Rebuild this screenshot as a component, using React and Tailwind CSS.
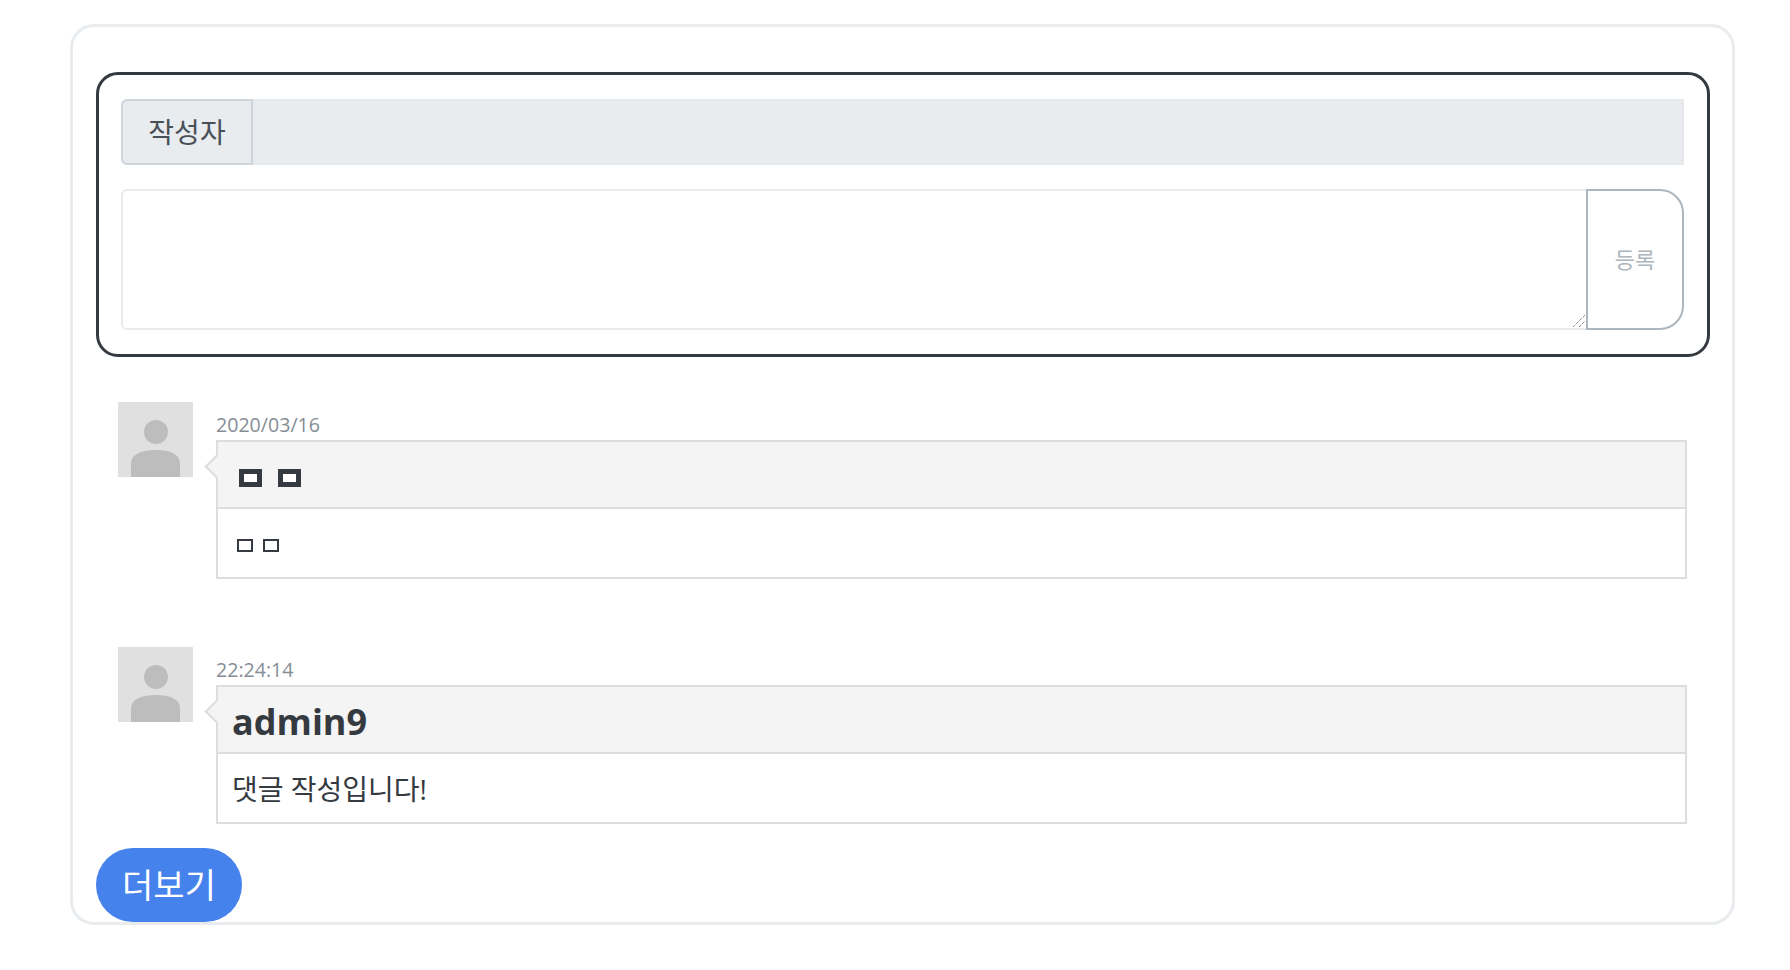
const font = "font-['Open_Sans','Noto_Sans_CJK_KR',sans-serif]";

function Avatar() {
  return (
    <svg width="75" height="75" viewBox="0 0 75 75" className="block shrink-0">
      <rect width="75" height="75" fill="#e0e0e0" />
      <circle cx="38" cy="30" r="12" fill="#bdbdbd" />
      <path d="M13 75 V62 C13 52 24 48 38 48 C52 48 62 52 62 62 V75 Z" fill="#bdbdbd" />
    </svg>
  );
}

function Tofu({ big }) {
  return (
    <span
      className={
        big
          ? "inline-block w-[23px] h-[18px] border-[5px] border-[#343a40] bg-white"
          : "inline-block w-[16px] h-[13px] border-2 border-[#343a40] bg-white"
      }
    />
  );
}

function Comment({ date, title, body, className }) {
  return (
    <div className={"flex gap-[23px] " + className}>
      <Avatar />
      <div className="flex-1 mt-[11px]">
        <div className="h-[27px] text-[19.6px] leading-[23px] text-[#868e96]">{date}</div>
        <div className="relative border-2 border-[#dddddd]">
          <div className="absolute left-[-10px] top-[16px] w-[17px] h-[17px] rotate-45 bg-[#f4f4f4] border-b-2 border-l-2 border-[#dddddd]" />
          <div className="relative h-[67px] bg-[#f4f4f4] border-b-2 border-[#dddddd] pl-[14px] flex items-center">
            {title}
          </div>
          <div className="h-[68px] bg-white pl-[14px] flex items-center">{body}</div>
        </div>
      </div>
    </div>
  );
}

export default function App() {
  return (
    <div className={"bg-white w-full min-h-[970px] pt-[24px] pl-[70px] " + font}>
      <div className="w-[1665px] h-[901px] border-[3px] border-[#e9ecef] rounded-[24px] pl-[23px] pr-[22px] pt-[45px] text-[#343a40]">
        <div className="border-[3px] border-[#343a40] rounded-[22px] pt-6 pl-[22px] pr-[23px] pb-[24px]">
          <div className="flex h-[66px]">
            <span className="flex items-center justify-center w-[132px] border-2 border-[#ced4da] rounded-l-[6px] bg-[#e9ecef] text-[28px] text-[#495057]">
              작성자
            </span>
            <input disabled className="flex-1 min-w-0 bg-[#e9ecef] border-2 border-l-0 border-[#e6e8eb] outline-none" />
          </div>
          <div className="flex h-[141px] mt-[24px]">
            <div className="relative flex-1 min-w-0">
              <textarea className="block w-full h-full resize-none border-2 border-r-0 border-[#e9ecef] rounded-l-[6px] outline-none" />
              <svg width="12" height="12" viewBox="0 0 12 12" className="absolute right-px bottom-[3px]">
                <path d="M0 12 L12 0 M6 12 L12 6" stroke="#555555" strokeWidth="1" strokeDasharray="1 1" fill="none" />
              </svg>
            </div>
            <button className="w-[98px] border-2 border-[#adb5bd] rounded-r-[24px] text-[22px] text-[#adb5bd] bg-white">
              등록
            </button>
          </div>
        </div>

        <div className="pl-[22px] pr-[23px] mt-[45px]">
          <Comment
            className="h-[245px]"
            date="2020/03/16"
            title={
              <span className="flex gap-[16px] pl-[7px] pt-[7px]">
                <Tofu big />
                <Tofu big />
              </span>
            }
            body={
              <span className="flex gap-[10px] pl-[5px] pt-[5px]">
                <Tofu />
                <Tofu />
              </span>
            }
          />
          <Comment
            date="22:24:14"
            title={<span className="text-[36px] leading-none font-bold pt-[5px] text-[#343a40]">admin9</span>}
            body={<span className="text-[28px] text-[#343a40] pt-[1px]">댓글 작성입니다!</span>}
          />
        </div>

        <button className="block mt-[24px] w-[146px] h-[74px] rounded-full bg-[#4582ec] text-white text-[34px]">
          더보기
        </button>
      </div>
    </div>
  );
}
